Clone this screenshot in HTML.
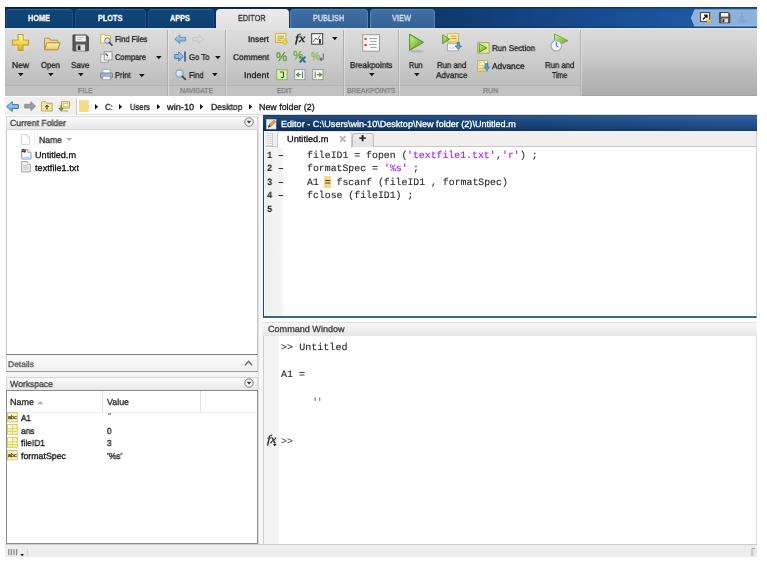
<!DOCTYPE html>
<html lang="en"><head><meta charset="utf-8"><title>MATLAB Editor</title>
<style>
html,body{margin:0;padding:0;background:#fff;}
body{width:767px;height:561px;position:relative;overflow:hidden;font-family:"Liberation Sans",sans-serif;}
.b{position:absolute;box-sizing:border-box;}
.t{position:absolute;white-space:pre;text-rendering:geometricPrecision;will-change:transform;-webkit-text-stroke:0.3px currentColor;line-height:14px;height:14px;transform-origin:0 50%;}
svg{position:absolute;overflow:visible;}
</style></head><body>
<div class="b" style="left:5px;top:7px;width:752px;height:20.8px;background:linear-gradient(to right,#0a315f 0%,#0c3769 55%,#174b90 78%,#2160ad 100%);"></div>
<div class="b" style="left:5px;top:7px;width:752px;height:20.8px;background:linear-gradient(to bottom,rgba(0,0,0,.3) 0,rgba(0,0,0,.3) 1px,rgba(0,0,0,0) 2px,rgba(0,0,0,0) 19px,rgba(0,0,0,.2) 20.8px);"></div>
<div class="b" style="left:5.5px;top:9px;width:67.5px;height:19px;border:1px solid #1d5185;border-top-color:#2e6498;border-bottom:none;border-radius:4px 4px 0 0;background:linear-gradient(#10467a,#0d3f70);"></div>
<div class="b" style="left:74.5px;top:9px;width:71.8px;height:19px;border:1px solid #1d5185;border-top-color:#2e6498;border-bottom:none;border-radius:4px 4px 0 0;background:linear-gradient(#10467a,#0d3f70);"></div>
<div class="b" style="left:148px;top:9px;width:66.3px;height:19px;border:1px solid #1d5185;border-top-color:#2e6498;border-bottom:none;border-radius:4px 4px 0 0;background:linear-gradient(#10467a,#0d3f70);"></div>
<div class="b" style="left:289.5px;top:9px;width:78px;height:18.5px;border:1px solid #5583b3;border-bottom:none;border-radius:4px 4px 0 0;background:linear-gradient(#416fa2,#34639a);"></div>
<div class="b" style="left:369.5px;top:9px;width:65.5px;height:18.5px;border:1px solid #5583b3;border-bottom:none;border-radius:4px 4px 0 0;background:linear-gradient(#416fa2,#34639a);"></div>
<div class="b" style="left:215.5px;top:9px;width:73.5px;height:19.5px;border-radius:4px 4px 0 0;background:linear-gradient(#ececec,#e0e0e0);"></div>
<svg style="left:690px;top:8.5px" width="67" height="18" viewBox="0 0 67 18"><path d="M4.700 .8H67V17H4.700L1.300 8.900Z" fill="#8db1db" stroke="#a9c6e6" stroke-width=".7"/></svg>
<div class="b" style="left:5px;top:27.8px;width:752px;height:68.7px;background:linear-gradient(#e6e6e6 0%,#dadada 3%,#cecece 35%,#b9b9b9 72%,#acacac 100%);border-bottom:1px solid #a2a2a2;"></div>
<div class="b" style="left:5px;top:27.8px;width:576px;height:57.7px;background:linear-gradient(#e6e6e6 0%,#dddddd 4%,#d0d0d0 45%,#bdbdbd 100%);"></div>
<div class="b" style="left:5px;top:85.5px;width:576px;height:10.5px;background:#c2c2c2;"></div>
<div class="b" style="left:166.5px;top:30px;width:1px;height:66px;background:#b0b0b0;"></div>
<div class="b" style="left:167.5px;top:30px;width:1px;height:66px;background:rgba(255,255,255,.35);"></div>
<div class="b" style="left:225px;top:30px;width:1px;height:66px;background:#b0b0b0;"></div>
<div class="b" style="left:226px;top:30px;width:1px;height:66px;background:rgba(255,255,255,.35);"></div>
<div class="b" style="left:342.5px;top:30px;width:1px;height:66px;background:#b0b0b0;"></div>
<div class="b" style="left:343.5px;top:30px;width:1px;height:66px;background:rgba(255,255,255,.35);"></div>
<div class="b" style="left:397.5px;top:30px;width:1px;height:66px;background:#b0b0b0;"></div>
<div class="b" style="left:398.5px;top:30px;width:1px;height:66px;background:rgba(255,255,255,.35);"></div>
<div class="b" style="left:580px;top:30px;width:1px;height:66px;background:#b0b0b0;"></div>
<div class="b" style="left:581px;top:30px;width:1px;height:66px;background:rgba(255,255,255,.35);"></div>
<div class="b" style="left:5px;top:97px;width:71px;height:18px;background:#f0f0f0;"></div>
<div class="b" style="left:76px;top:97.5px;width:681px;height:17.5px;background:#fff;border-left:1px solid #c9c9c9;border-bottom:1px solid #dcdcdc;"></div>
<div class="b" style="left:5.5px;top:116px;width:252.5px;height:14px;background:linear-gradient(#fbfbfb,#e6e6e6);border:1px solid #dadada;border-bottom:1px solid #d6d6d6;"></div>
<div class="b" style="left:5.5px;top:130px;width:252.5px;height:225px;background:#fff;border-left:1px solid #c8c8c8;border-right:1px solid #c8c8c8;border-bottom:1px solid #7d7d7d;"></div>
<div class="b" style="left:5.5px;top:355px;width:252.5px;height:16.5px;background:linear-gradient(#fdfdfd,#f0f0f0);border-bottom:1px solid #9a9a9a;border-left:1px solid #d0d0d0;border-right:1px solid #d0d0d0;"></div>
<div class="b" style="left:5.5px;top:371.5px;width:252.5px;height:5px;background:#f4f4f4;"></div>
<div class="b" style="left:5.5px;top:376.5px;width:252.5px;height:14px;background:linear-gradient(#fbfbfb,#e6e6e6);border:1px solid #d4d4d4;border-bottom:none;"></div>
<div class="b" style="left:5.5px;top:390px;width:252.5px;height:153.5px;background:#fff;border:1px solid #8c8c8c;"></div>
<div class="b" style="left:102px;top:391px;width:1px;height:21px;background:#e2e2e2;"></div>
<div class="b" style="left:200px;top:391px;width:1px;height:21px;background:#e2e2e2;"></div>
<div class="b" style="left:6.5px;top:411.5px;width:250px;height:1px;background:#f0f0f0;"></div>
<div class="b" style="left:258px;top:115px;width:5px;height:428.5px;background:#f7f7f7;border-left:1px solid #e0e0e0;"></div>
<div class="b" style="left:263px;top:115px;width:494px;height:202.5px;background:#fff;border-left:1.7px solid #1f4678;border-bottom:2px solid #3e6495;border-right:1px solid #d0d0d0;"></div>
<div class="b" style="left:263px;top:115px;width:494px;height:15.8px;background:linear-gradient(to right,#133c6f 0%,#16427a 40%,#1f508c 80%,#235593 100%);"></div>
<div class="b" style="left:263px;top:115px;width:494px;height:15.8px;background:linear-gradient(rgba(0,0,0,.2) 0,rgba(255,255,255,.08) 1.2px,rgba(255,255,255,0) 45%,rgba(0,0,0,.2) 92%,rgba(0,0,0,.35) 100%);"></div>
<div class="b" style="left:265px;top:130.8px;width:491px;height:16.7px;background:linear-gradient(#eef3f8 0,#f0efee 2.5px,#f0efee 100%);border-bottom:1px solid #c6c6c6;"></div>
<div class="b" style="left:264.7px;top:147.5px;width:19px;height:168px;background:linear-gradient(to right,#eaf1f9 0,#f1f1f1 2px,#f3f3f3 80%,#fbfbfb 100%);"></div>
<div class="b" style="left:277px;top:131.3px;width:74.5px;height:16.4px;background:#fff;border:1px solid #cdcdcd;border-top-color:#e0e0e0;border-bottom:none;border-radius:4px 4px 0 0;"></div>
<div class="b" style="left:351.5px;top:132.5px;width:22.5px;height:14.5px;background:linear-gradient(#ececec,#e2e2e2);border:1px solid #bcbcbc;border-bottom:none;border-radius:3px 3px 0 0;"></div>
<div class="b" style="left:267px;top:133px;width:6px;height:13px;background:repeating-linear-gradient(#d8d8d8 0,#d8d8d8 1px,#f4f4f4 1px,#f4f4f4 2px);border-right:1px solid #c9c9c9;"></div>
<div class="b" style="left:324px;top:175.5px;width:7px;height:12px;background:#f8d98a;"></div>
<div class="b" style="left:263px;top:321.5px;width:494px;height:14.5px;background:linear-gradient(#f8f8f8,#e6e6e6);border-top:1px solid #e2e2e2;"></div>
<div class="b" style="left:263px;top:336px;width:494px;height:207.5px;background:#fff;border-left:1px solid #cfcfcf;border-right:1px solid #dcdcdc;"></div>
<div class="b" style="left:264px;top:336px;width:14.5px;height:207.5px;background:#f3f3f3;"></div>
<div class="b" style="left:5px;top:543.5px;width:752px;height:13px;background:#ededed;border-top:1px solid #cdcdcd;"></div>
<svg width="0" height="0" style="left:0;top:0"><defs>
<linearGradient id="gNew" x1="0" y1="0" x2="0" y2="1"><stop offset="0" stop-color="#fbf3a6"/><stop offset=".5" stop-color="#f3d94e"/><stop offset="1" stop-color="#d9ae22"/></linearGradient>
<linearGradient id="gFold" x1="0" y1="0" x2="0" y2="1"><stop offset="0" stop-color="#fdf2c4"/><stop offset="1" stop-color="#e9c560"/></linearGradient>
<linearGradient id="gGreen" x1="0" y1="0" x2="1" y2="1"><stop offset="0" stop-color="#d4f0a0"/><stop offset=".55" stop-color="#8cc63f"/><stop offset="1" stop-color="#5e9a28"/></linearGradient>
<linearGradient id="gBlueA" x1="0" y1="0" x2="0" y2="1"><stop offset="0" stop-color="#c4e0f6"/><stop offset="1" stop-color="#5a9bd0"/></linearGradient>
<linearGradient id="gNote" x1="0" y1="0" x2="0" y2="1"><stop offset="0" stop-color="#fdf8c8"/><stop offset="1" stop-color="#f0e27c"/></linearGradient>
<linearGradient id="gLens" x1="0" y1="0" x2="1" y2="1"><stop offset="0" stop-color="#ffffff"/><stop offset="1" stop-color="#a8cdea"/></linearGradient>
<radialGradient id="gGlow"><stop offset="0" stop-color="#fff" stop-opacity=".9"/><stop offset="1" stop-color="#fff" stop-opacity="0"/></radialGradient>
</defs></svg>
<svg style="left:10px;top:32px" width="21" height="21" viewBox="0 0 21 21"><circle cx="10.5" cy="10.5" r="10.5" fill="url(#gGlow)" opacity=".6"/><path d="M8 2.5h5v5.5h5.5v5H13v5.5H8V13H2.500V8H8z" fill="url(#gNew)" stroke="#c39a17" stroke-width="1.1" stroke-linejoin="round"/><path d="M9 4h3v5" fill="none" stroke="#fffbe0" stroke-width="1" opacity=".8"/></svg>
<svg style="left:42.5px;top:36.8px" width="18" height="14.5" viewBox="0 0 18 14.5"><path d="M1.500 12.800V2.200Q1.500 1.200 2.500 1.200H6.300L7.800 3.200H14Q15 3.200 15 4.200V6" fill="#efd98c" stroke="#b4943a" stroke-width="1"/><path d="M1.500 12.800L3.800 5.800H17L14.800 12.800Z" fill="url(#gFold)" stroke="#b08c2c" stroke-width="1" stroke-linejoin="round"/></svg>
<svg style="left:72px;top:34.2px" width="17.5" height="18" viewBox="0 0 17.5 18"><path d="M1 1H14.300L16.300 3V16.800H1Z" fill="#595959" stroke="#3c3c3c" stroke-width="1"/><rect x="3.500" y="1.500" width="10.300" height="6" fill="#f6f6f6"/><path d="M5 3.500h7M5 5.500h5" stroke="#b0b0b0" stroke-width=".8"/><rect x="4.300" y="10.500" width="8.700" height="6.300" fill="#dcdcdc"/><rect x="5.800" y="11.500" width="2.600" height="4.500" fill="#2e2e2e"/></svg>
<svg style="left:99.5px;top:33px" width="13" height="12.5" viewBox="0 0 13 12.5"><path d="M.7 10V1.200H4.500L5.500 2.500H10.500V10Z" fill="#fbf8e2" stroke="#d2bb3e" stroke-width="1.100"/><circle cx="7.400" cy="7.600" r="2.700" fill="url(#gLens)" stroke="#5a7fa6" stroke-width="1"/><path d="M9.400 9.700L12 12.200" stroke="#33475e" stroke-width="1.600" stroke-linecap="round"/></svg>
<svg style="left:99.5px;top:51px" width="13" height="12" viewBox="0 0 13 12"><rect x=".8" y="3.200" width="7.500" height="8" fill="#f4f4f4" stroke="#9a9a9a" stroke-width=".9"/><rect x="4.200" y=".8" width="7.800" height="8.200" fill="#fcfcfc" stroke="#8a8a8a" stroke-width=".9"/><path d="M5.500 2.500L8 5" stroke="#555" stroke-width="1.200"/><path d="M6 6.800h4" stroke="#c8c8c8" stroke-width=".8"/></svg>
<svg style="left:99.5px;top:68.8px" width="13" height="11.5" viewBox="0 0 13 11.5"><rect x="3" y=".6" width="7" height="4" fill="#fdfdfd" stroke="#a4acb8" stroke-width=".8"/><rect x=".6" y="4" width="11.800" height="5" rx="1" fill="#a9b7c8" stroke="#6d7c90" stroke-width=".9"/><rect x="2.800" y="7.200" width="7.400" height="3.600" fill="#f8f8f8" stroke="#8a94a2" stroke-width=".8"/></svg>
<svg style="left:174px;top:33.5px" width="12.5" height="10.5" viewBox="0 0 12.5 10.5"><path d="M.8 5.200L5.800 .8V3.400H11.700V7H5.800V9.700Z" fill="url(#gBlueA)" stroke="#5b88b6" stroke-width=".9" stroke-linejoin="round"/></svg>
<svg style="left:191.5px;top:33.5px" width="12.5" height="10.5" viewBox="0 0 12.5 10.5"><path d="M11.700 5.200L6.700 .8V3.400H.8V7H6.700V9.700Z" fill="#d8d8d8" stroke="#c0c0c0" stroke-width=".9" stroke-linejoin="round" opacity=".85"/></svg>
<svg style="left:174px;top:51.3px" width="12.5" height="11" viewBox="0 0 12.5 11"><path d="M9.300 5.500L4.700 1V3.600H.8V7.400H4.700V10Z" fill="url(#gBlueA)" stroke="#3f70a4" stroke-width=".9" stroke-linejoin="round"/><path d="M11 .6V10.400" stroke="#2b5688" stroke-width="1.500"/></svg>
<svg style="left:175px;top:69px" width="11.5" height="11.5" viewBox="0 0 11.5 11.5"><circle cx="4.600" cy="4.600" r="3.700" fill="url(#gLens)" stroke="#8c9aaa" stroke-width="1.100"/><path d="M7.400 7.400L10.400 10.400" stroke="#3a4a5e" stroke-width="1.800" stroke-linecap="round"/></svg>
<svg style="left:274.8px;top:33.2px" width="13" height="12" viewBox="0 0 13 12"><rect x=".6" y=".6" width="10.300" height="9" fill="url(#gNote)" stroke="#c6ae3a" stroke-width=".9"/><path d="M2.500 3.200h6.500M2.500 5.200h6.500M2.500 7.200h4" stroke="#9c8a3a" stroke-width=".8"/><path d="M10 6.300L12.700 9 10 11.700 7.300 9Z" fill="#f6d64a" stroke="#c9a21a" stroke-width=".7"/></svg>
<svg style="left:310.8px;top:33.2px" width="12.5" height="12" viewBox="0 0 12.5 12"><rect x=".7" y=".7" width="11" height="10.500" fill="#fdfdfd" stroke="#3c3c3c" stroke-width="1"/><path d="M2 9L5 5L6.500 7L9 2.500" fill="none" stroke="#555" stroke-width=".9"/><rect x="8" y="6" width="1.800" height="4.500" fill="#222"/></svg>
<svg style="left:275.5px;top:69px" width="12" height="11.5" viewBox="0 0 12 11.5"><rect x=".7" y=".7" width="10.400" height="10" fill="#d9efb6" stroke="#86b54c" stroke-width="1"/><path d="M4 3H7.500V8.500H5" fill="none" stroke="#3e4a2e" stroke-width="1"/></svg>
<svg style="left:293.5px;top:69.3px" width="12" height="11.5" viewBox="0 0 12 11.5"><rect x=".7" y=".7" width="10.300" height="10" fill="#fbfbfb" stroke="#8e8e8e" stroke-width=".9"/><path d="M1.600 5.700L5 3V8.400Z" fill="#5e9a28"/><path d="M4.500 5.700H7.300" stroke="#5e9a28" stroke-width="1.300"/><path d="M8.600 2.500V9" stroke="#6a6a6a" stroke-width="1"/></svg>
<svg style="left:311.5px;top:69.3px" width="12" height="11.5" viewBox="0 0 12 11.5"><rect x=".7" y=".7" width="10.300" height="10" fill="#fbfbfb" stroke="#8e8e8e" stroke-width=".9"/><path d="M10.600 5.700L7.200 3V8.400Z" fill="#5e9a28"/><path d="M4.800 5.700H7.600" stroke="#5e9a28" stroke-width="1.300"/><path d="M3.200 2.500V9" stroke="#6a6a6a" stroke-width="1"/></svg>
<svg style="left:362px;top:33.7px" width="18.5" height="18" viewBox="0 0 18.5 18"><rect x=".7" y=".7" width="16.800" height="16.500" fill="#f7f7f7" stroke="#9a9a9a" stroke-width="1"/><circle cx="3.600" cy="5" r="1.300" fill="#d8434a"/><circle cx="3.600" cy="11" r="1.300" fill="#d8434a"/><path d="M7 4.500h8M8.500 7.500h6M7 10.500h7.500M8.500 13.500h6" stroke="#a8a8a8" stroke-width="1.100"/></svg>
<svg style="left:407.5px;top:33px" width="17" height="20" viewBox="0 0 17 20"><ellipse cx="9" cy="18.300" rx="7" ry="1.300" fill="#7a7a7a" opacity=".35"/><path d="M1.600 1.200L15.300 9.300 1.600 17.300Z" fill="url(#gGreen)" stroke="#5b8f28" stroke-width="1.100" stroke-linejoin="round"/></svg>
<svg style="left:441.5px;top:33px" width="20" height="19" viewBox="0 0 20 19"><rect x="5.500" y=".8" width="11" height="8.200" fill="url(#gNote)" stroke="#c9b548" stroke-width=".9"/><path d="M8.500 3.200h6M8.500 5.500h6" stroke="#b5a14a" stroke-width=".9"/><path d="M.7 1.800L7.600 6.200 .7 10.600Z" fill="url(#gGreen)" stroke="#5b8f28" stroke-width=".9" stroke-linejoin="round"/><rect x="5.500" y="10.800" width="11" height="7" fill="#fbfbfb" stroke="#a8a8a8" stroke-width=".9"/><path d="M7.500 15h5" stroke="#bbb" stroke-width=".9"/><path d="M15.200 9.500V13H13L16.300 16.600 19.500 13H17.400V9.500Z" fill="#5d9bd6" stroke="#2f6aa8" stroke-width=".7"/></svg>
<svg style="left:476.5px;top:41.8px" width="13" height="12" viewBox="0 0 13 12"><rect x=".7" y=".7" width="11.500" height="10.500" fill="#e9eca0" stroke="#9aa646" stroke-width=".9"/><path d="M2.200 1.800L10 6 2.200 10.200Z" fill="url(#gGreen)" stroke="#4f8422" stroke-width=".9" stroke-linejoin="round"/></svg>
<svg style="left:476.5px;top:60px" width="13" height="12" viewBox="0 0 13 12"><rect x=".7" y=".7" width="9.800" height="10.500" fill="url(#gNote)" stroke="#b9ab52" stroke-width=".9"/><rect x="2.200" y="2.200" width="5.500" height="3.500" fill="#fdfdf0" stroke="#c8bb6a" stroke-width=".6"/><path d="M2 8.800h5" stroke="#b5a14a" stroke-width=".8"/><path d="M8.600 3.500V7H6.800L9.800 10.600 12.700 7H10.900V3.500Z" fill="#5d9bd6" stroke="#2f6aa8" stroke-width=".7"/></svg>
<svg style="left:550px;top:33px" width="19" height="19.5" viewBox="0 0 19 19.5"><path d="M4.500 .9L18 7.600 4.500 14.300Z" fill="url(#gGreen)" stroke="#6ea23a" stroke-width=".9" stroke-linejoin="round"/><circle cx="6.300" cy="12.800" r="5.300" fill="#f4f8fc" stroke="#a6aeb8" stroke-width="1.300"/><path d="M6.300 9.200V12.800L8.500 14.200" fill="none" stroke="#3d5d80" stroke-width="1"/></svg>
<svg style="left:700.4px;top:12px" width="11" height="11" viewBox="0 0 11 11"><rect x=".6" y=".6" width="9" height="9" fill="#fdfdfd" stroke="#333" stroke-width=".9"/><path d="M3 7.500L6.500 3.500M4 3.200H7V6" fill="none" stroke="#111" stroke-width="1.300"/><path d="M8.500 6L9.300 7.700 11 8 9.800 9.300 10 11 8.500 10.200 7 11 7.200 9.300 6 8 7.700 7.700Z" fill="#f4d648" stroke="#c8a520" stroke-width=".4"/></svg>
<svg style="left:719px;top:12px" width="11.5" height="11.5" viewBox="0 0 11.5 11.5"><path d="M.6 .6H9.300L10.800 2V10.800H.6Z" fill="#555" stroke="#333" stroke-width=".8"/><rect x="2" y="1" width="7.200" height="3.600" fill="#f2f2f2"/><rect x="2.500" y="6.500" width="6.500" height="4" fill="#dedede"/><rect x="3.500" y="7.200" width="1.800" height="3" fill="#222"/></svg>
<svg style="left:737px;top:13px" width="10.5" height="10" viewBox="0 0 10.5 10"><path d="M5 0V5M2.500 3L5 5.500 7.500 3M1 7H9.500M1 9H9.500" fill="none" stroke="#7f9fc6" stroke-width="1"/></svg>
<svg style="left:6.3px;top:100.5px" width="13" height="11.5" viewBox="0 0 13 11.5"><path d="M.7 5.500L6.200 .7V3.600H12.300V7.500H6.200V10.400Z" fill="url(#gBlueA)" stroke="#3b78b4" stroke-width="1" stroke-linejoin="round"/></svg>
<svg style="left:23.5px;top:101.2px" width="12.5" height="10.5" viewBox="0 0 12.5 10.5"><path d="M11.800 5.200L6.800 .7V3.300H.6V7.100H6.800V9.700Z" fill="#9b9b9b" stroke="#8a8a8a" stroke-width=".7" stroke-linejoin="round"/></svg>
<svg style="left:41.3px;top:101.2px" width="12.5" height="10.6" viewBox="0 0 12.5 10.6"><path d="M.6 10V1.700Q.6 .7 1.600 .7H4.600L5.600 2.200H11.200V10Z" fill="#f5e8a6" stroke="#b7a04a" stroke-width=".9"/><path d="M6 8.500V4.500M4.300 6L6 4.300 7.700 6" fill="none" stroke="#222" stroke-width="1"/></svg>
<svg style="left:58.3px;top:100.5px" width="12.5" height="12" viewBox="0 0 12.5 12"><rect x="3.500" y=".7" width="8" height="6.300" fill="#f5e8a6" stroke="#b7a04a" stroke-width=".9"/><rect x="5.300" y="2.500" width="4.500" height="3" fill="#fdf9dc" stroke="#c9b868" stroke-width=".6"/><path d="M3 4V8.500M.8 6.800L3 9.500 5.300 6.800" fill="none" stroke="#4e9a2a" stroke-width="1.300"/><path d="M3 10H10" stroke="#b7a04a" stroke-width=".9"/></svg>
<svg style="left:79px;top:100px" width="10" height="12" viewBox="0 0 10 12"><rect x=".5" y=".5" width="8.800" height="11" fill="#f7dc85" stroke="#f1d27a" stroke-width=".6"/></svg>
<svg style="left:17.7px;top:73.45px" width="5.6" height="3.3" viewBox="0 0 5.6 3.3"><path d="M0 0H5.6 L2.8 3.3 Z" fill="#111"/></svg>
<svg style="left:48.2px;top:73.45px" width="5.6" height="3.3" viewBox="0 0 5.6 3.3"><path d="M0 0H5.6 L2.8 3.3 Z" fill="#111"/></svg>
<svg style="left:77.7px;top:73.45px" width="5.6" height="3.3" viewBox="0 0 5.6 3.3"><path d="M0 0H5.6 L2.8 3.3 Z" fill="#111"/></svg>
<svg style="left:155.5px;top:55.65px" width="5.6" height="3.3" viewBox="0 0 5.6 3.3"><path d="M0 0H5.6 L2.8 3.3 Z" fill="#111"/></svg>
<svg style="left:138.9px;top:73.65px" width="5.6" height="3.3" viewBox="0 0 5.6 3.3"><path d="M0 0H5.6 L2.8 3.3 Z" fill="#111"/></svg>
<svg style="left:215.2px;top:55.85px" width="5.6" height="3.3" viewBox="0 0 5.6 3.3"><path d="M0 0H5.6 L2.8 3.3 Z" fill="#111"/></svg>
<svg style="left:212px;top:73.45px" width="5.6" height="3.3" viewBox="0 0 5.6 3.3"><path d="M0 0H5.6 L2.8 3.3 Z" fill="#111"/></svg>
<svg style="left:331.5px;top:36.95px" width="5.6" height="3.3" viewBox="0 0 5.6 3.3"><path d="M0 0H5.6 L2.8 3.3 Z" fill="#111"/></svg>
<svg style="left:368.8px;top:73.45px" width="5.6" height="3.3" viewBox="0 0 5.6 3.3"><path d="M0 0H5.6 L2.8 3.3 Z" fill="#111"/></svg>
<svg style="left:413.5px;top:73.45px" width="5.6" height="3.3" viewBox="0 0 5.6 3.3"><path d="M0 0H5.6 L2.8 3.3 Z" fill="#111"/></svg>
<svg style="left:94.9px;top:104.2px" width="3.2" height="5.4" viewBox="0 0 3.2 5.4"><path d="M0 0V5.4 L3.2 2.7 Z" fill="#111"/></svg>
<svg style="left:119.1px;top:104.2px" width="3.2" height="5.4" viewBox="0 0 3.2 5.4"><path d="M0 0V5.4 L3.2 2.7 Z" fill="#111"/></svg>
<svg style="left:156.7px;top:104.2px" width="3.2" height="5.4" viewBox="0 0 3.2 5.4"><path d="M0 0V5.4 L3.2 2.7 Z" fill="#111"/></svg>
<svg style="left:200.4px;top:104.2px" width="3.2" height="5.4" viewBox="0 0 3.2 5.4"><path d="M0 0V5.4 L3.2 2.7 Z" fill="#111"/></svg>
<svg style="left:248.7px;top:104.2px" width="3.2" height="5.4" viewBox="0 0 3.2 5.4"><path d="M0 0V5.4 L3.2 2.7 Z" fill="#111"/></svg>
<svg style="left:244.4px;top:117.4px" width="10" height="10" viewBox="0 0 10 10"><circle cx="5" cy="5" r="4.200" fill="#fcfcfc" stroke="#6a6a6a" stroke-width=".9"/><path d="M2.700 3.700H7.300L5 6.800Z" fill="#3c3c3c"/></svg>
<svg style="left:244.2px;top:377.5px" width="10" height="10" viewBox="0 0 10 10"><circle cx="5" cy="5" r="4.200" fill="#fcfcfc" stroke="#6a6a6a" stroke-width=".9"/><path d="M2.700 3.700H7.300L5 6.800Z" fill="#3c3c3c"/></svg>
<svg style="left:243.7px;top:360px" width="9" height="6" viewBox="0 0 9 6"><path d="M1 5.200L4.500 1.300 8 5.200" fill="none" stroke="#666" stroke-width="1.400"/></svg>
<svg style="left:21px;top:134px" width="9.5" height="11" viewBox="0 0 9.5 11"><path d="M.6 .6H6L8.700 3.300V10.400H.6Z" fill="#fff" stroke="#cfcfcf" stroke-width=".9"/><path d="M6 .6V3.300H8.700" fill="none" stroke="#d8d8d8" stroke-width=".7"/></svg>
<svg style="left:65.5px;top:137.5px" width="6.3" height="3.2" viewBox="0 0 6.3 3.2"><path d="M0 0H6.300L3.150 3.200Z" fill="#b4b4b4"/></svg>
<svg style="left:37px;top:400.5px" width="6.6" height="3.3" viewBox="0 0 6.6 3.3"><path d="M0 3.300H6.600L3.300 0Z" fill="#b4b4b4"/></svg>
<svg style="left:33.5px;top:131px" width="4.5" height="15" viewBox="0 0 4.5 15"><path d="M.5 0V15M3.900 0V15" stroke="#ededed" stroke-width=".8"/></svg>
<svg style="left:21px;top:148px" width="11" height="11.8" viewBox="0 0 11 11.8"><path d="M.7 1.500H6.800L10 4.500V11H.7Z" fill="#fbfcfe" stroke="#7f9cc4" stroke-width="1"/><path d="M6.800 1.500V4.500H10" fill="#e4ecf6" stroke="#7f9cc4" stroke-width=".7"/><path d="M.3 3.800L2.200 .4 4 2.600 5.300 1.600 4.300 4.800Z" fill="#7a2418"/><path d="M1.200 3.300L2.300 1.500 3.300 3Z" fill="#e0683a"/><path d="M2 9.300h6.500" stroke="#b6c6dc" stroke-width=".9"/></svg>
<svg style="left:21px;top:161.2px" width="10.2" height="11.6" viewBox="0 0 10.2 11.6"><path d="M.6 .6H6.300L9.300 3.500V10.900H.6Z" fill="#f2f2f2" stroke="#9c9c9c" stroke-width=".9"/><path d="M6.300 .6V3.500H9.300" fill="#fff" stroke="#9c9c9c" stroke-width=".7"/><path d="M2.200 4.500h4M2.200 6.300h5.500M2.200 8.100h5.500" stroke="#b5b5b5" stroke-width=".8"/></svg>
<svg style="left:6.6px;top:411.6px" width="11" height="10.5" viewBox="0 0 11 10.5"><rect x=".5" y=".5" width="9.800" height="9.300" fill="#f8f4c0" stroke="#cfc670" stroke-width=".9"/></svg>
<svg style="left:6.6px;top:424.3px" width="11" height="11" viewBox="0 0 11 11"><rect x=".5" y=".5" width="9.800" height="9.800" fill="#f7f3b2" stroke="#d4c95e" stroke-width=".9"/><rect x="1" y="1" width="4.300" height="3.600" fill="#fdfdf4"/><path d="M5.400 .5V10.300M.5 4.700H10.300M.5 7.500H10.300" stroke="#d9cf6e" stroke-width=".8"/></svg>
<svg style="left:6.6px;top:436.8px" width="11" height="11" viewBox="0 0 11 11"><rect x=".5" y=".5" width="9.800" height="9.800" fill="#f7f3b2" stroke="#d4c95e" stroke-width=".9"/><rect x="1" y="1" width="4.300" height="3.600" fill="#fdfdf4"/><path d="M5.400 .5V10.300M.5 4.700H10.300M.5 7.500H10.300" stroke="#d9cf6e" stroke-width=".8"/></svg>
<svg style="left:6.6px;top:449.8px" width="11" height="10.5" viewBox="0 0 11 10.5"><rect x=".5" y=".5" width="9.800" height="9.300" fill="#f8f4c0" stroke="#cfc670" stroke-width=".9"/></svg>
<svg style="left:265.8px;top:118.6px" width="10.8" height="10.4" viewBox="0 0 10.8 10.4"><rect x=".4" y=".4" width="9.600" height="9.600" fill="#eef0f2" stroke="#c9cdd2" stroke-width=".6"/><path d="M2.200 8.400L3 5.600 8 1 9.800 2.800 4.800 7.600Z" fill="#e89a3c" stroke="#b5651d" stroke-width=".5"/><path d="M2.200 8.400L3 5.600 4.800 7.600Z" fill="#3a3a3a"/></svg>
<svg style="left:272.8px;top:444px" width="3.6" height="2.2" viewBox="0 0 3.6 2.2"><path d="M0 0H3.600L1.800 2.200Z" fill="#111"/></svg>
<svg style="left:8px;top:548.6px" width="21" height="7.5" viewBox="0 0 21 7.5"><path d="M.8 0V6.200M3.400 0V6.200M6 0V6.200M8.600 0V6.200" stroke="#8a8a8a" stroke-width="1.300"/><path d="M12.300 5H16L14.150 7.200Z" fill="#111"/><path d="M19.300 0V7.500" stroke="#cfcfcf" stroke-width=".9"/></svg>
<svg style="left:751px;top:547px" width="5" height="9" viewBox="0 0 5 9"><path d="M1 9V1.500H4.500" fill="none" stroke="#a8a8a8" stroke-width="1"/><path d="M3 9V3.500" stroke="#d0d0d0" stroke-width=".8"/></svg>
<svg style="left:298.8px;top:55.8px" width="7" height="7" viewBox="0 0 7 7"><path d="M1.200 1.200L5.800 5.800M5.800 1.200L1.200 5.800" stroke="#2f68ad" stroke-width="2" stroke-linecap="round"/></svg>
<svg style="left:318.5px;top:52.5px" width="5.5" height="9" viewBox="0 0 5.5 9"><path d="M4.300 .5V6.300H1.200M2.800 4.500L1 6.300 2.800 8" fill="none" stroke="#6e6e6e" stroke-width="1.100"/></svg>
<span class="t" id="t0" style="left:28.00px;top:11.30px;font-size:8.70px;color:#ffffff;font-family:'Liberation Sans', sans-serif;font-weight:bold;transform:scaleX(0.8441);">HOME</span>
<span class="t" id="t1" style="left:97.50px;top:11.30px;font-size:8.70px;color:#ffffff;font-family:'Liberation Sans', sans-serif;font-weight:bold;transform:scaleX(0.8457);">PLOTS</span>
<span class="t" id="t2" style="left:170.20px;top:11.30px;font-size:8.70px;color:#ffffff;font-family:'Liberation Sans', sans-serif;font-weight:bold;transform:scaleX(0.8491);">APPS</span>
<span class="t" id="t3" style="left:237.50px;top:11.30px;font-size:8.70px;color:#333;font-family:'Liberation Sans', sans-serif;transform:scaleX(0.8417);">EDITOR</span>
<span class="t" id="t4" style="left:312.50px;top:11.30px;font-size:8.70px;color:#dbe7f4;font-family:'Liberation Sans', sans-serif;transform:scaleX(0.8390);">PUBLISH</span>
<span class="t" id="t5" style="left:392.00px;top:11.30px;font-size:8.70px;color:#dbe7f4;font-family:'Liberation Sans', sans-serif;transform:scaleX(0.8557);">VIEW</span>
<span class="t" id="t6" style="left:12.00px;top:57.50px;font-size:8.60px;color:#1e1e1e;font-family:'Liberation Sans', sans-serif;transform:scaleX(0.9882);">New</span>
<span class="t" id="t7" style="left:41.00px;top:57.50px;font-size:8.60px;color:#1e1e1e;font-family:'Liberation Sans', sans-serif;transform:scaleX(0.9034);">Open</span>
<span class="t" id="t8" style="left:71.00px;top:57.50px;font-size:8.60px;color:#1e1e1e;font-family:'Liberation Sans', sans-serif;transform:scaleX(0.9442);">Save</span>
<span class="t" id="t9" style="left:115.00px;top:32.00px;font-size:8.40px;color:#1e1e1e;font-family:'Liberation Sans', sans-serif;transform:scaleX(0.8950);">Find Files</span>
<span class="t" id="t10" style="left:115.00px;top:50.00px;font-size:8.40px;color:#1e1e1e;font-family:'Liberation Sans', sans-serif;transform:scaleX(0.8998);">Compare</span>
<span class="t" id="t11" style="left:115.00px;top:68.00px;font-size:8.40px;color:#1e1e1e;font-family:'Liberation Sans', sans-serif;transform:scaleX(0.8994);">Print</span>
<span class="t" id="t12" style="left:189.00px;top:50.00px;font-size:8.40px;color:#1e1e1e;font-family:'Liberation Sans', sans-serif;transform:scaleX(0.9233);">Go To</span>
<span class="t" id="t13" style="left:189.00px;top:68.00px;font-size:8.40px;color:#1e1e1e;font-family:'Liberation Sans', sans-serif;transform:scaleX(0.8897);">Find</span>
<span class="t" id="t14" style="left:248.00px;top:32.00px;font-size:8.40px;color:#1e1e1e;font-family:'Liberation Sans', sans-serif;">Insert</span>
<span class="t" id="t15" style="left:233.00px;top:50.00px;font-size:8.40px;color:#1e1e1e;font-family:'Liberation Sans', sans-serif;transform:scaleX(0.9914);">Comment</span>
<span class="t" id="t16" style="left:244.00px;top:68.00px;font-size:8.40px;color:#1e1e1e;font-family:'Liberation Sans', sans-serif;transform:scaleX(1.0731);">Indent</span>
<span class="t" id="t17" style="left:350.00px;top:57.50px;font-size:8.60px;color:#1e1e1e;font-family:'Liberation Sans', sans-serif;transform:scaleX(0.9363);">Breakpoints</span>
<span class="t" id="t18" style="left:408.50px;top:57.50px;font-size:8.60px;color:#1e1e1e;font-family:'Liberation Sans', sans-serif;transform:scaleX(0.8563);">Run</span>
<span class="t" id="t19" style="left:436.70px;top:57.50px;font-size:8.60px;color:#1e1e1e;font-family:'Liberation Sans', sans-serif;transform:scaleX(0.9015);">Run and</span>
<span class="t" id="t20" style="left:436.00px;top:67.50px;font-size:8.60px;color:#1e1e1e;font-family:'Liberation Sans', sans-serif;transform:scaleX(0.9416);">Advance</span>
<span class="t" id="t21" style="left:492.00px;top:41.00px;font-size:8.40px;color:#1e1e1e;font-family:'Liberation Sans', sans-serif;transform:scaleX(0.9425);">Run Section</span>
<span class="t" id="t22" style="left:492.00px;top:59.00px;font-size:8.40px;color:#1e1e1e;font-family:'Liberation Sans', sans-serif;">Advance</span>
<span class="t" id="t23" style="left:544.70px;top:57.50px;font-size:8.60px;color:#1e1e1e;font-family:'Liberation Sans', sans-serif;transform:scaleX(0.9015);">Run and</span>
<span class="t" id="t24" style="left:551.70px;top:67.50px;font-size:8.60px;color:#1e1e1e;font-family:'Liberation Sans', sans-serif;transform:scaleX(0.8146);">Time</span>
<span class="t" id="t25" style="left:78.00px;top:84.00px;font-size:7.20px;color:#808080;font-family:'Liberation Sans', sans-serif;transform:scaleX(0.9547);">FILE</span>
<span class="t" id="t26" style="left:180.00px;top:84.00px;font-size:7.20px;color:#808080;font-family:'Liberation Sans', sans-serif;transform:scaleX(0.9353);">NAVIGATE</span>
<span class="t" id="t27" style="left:277.00px;top:84.00px;font-size:7.20px;color:#808080;font-family:'Liberation Sans', sans-serif;transform:scaleX(0.9160);">EDIT</span>
<span class="t" id="t28" style="left:346.70px;top:84.00px;font-size:7.20px;color:#808080;font-family:'Liberation Sans', sans-serif;transform:scaleX(0.9447);">BREAKPOINTS</span>
<span class="t" id="t29" style="left:482.50px;top:84.00px;font-size:7.20px;color:#808080;font-family:'Liberation Sans', sans-serif;transform:scaleX(0.9629);">RUN</span>
<span class="t" id="t30" style="left:105.00px;top:99.80px;font-size:8.80px;color:#1a1a1a;font-family:'Liberation Sans', sans-serif;transform:scaleX(0.9078);">C:</span>
<span class="t" id="t31" style="left:130.00px;top:99.80px;font-size:8.80px;color:#1a1a1a;font-family:'Liberation Sans', sans-serif;transform:scaleX(0.8702);">Users</span>
<span class="t" id="t32" style="left:166.80px;top:99.80px;font-size:8.80px;color:#1a1a1a;font-family:'Liberation Sans', sans-serif;transform:scaleX(1.0493);">win-10</span>
<span class="t" id="t33" style="left:210.60px;top:99.80px;font-size:8.80px;color:#1a1a1a;font-family:'Liberation Sans', sans-serif;transform:scaleX(0.9727);">Desktop</span>
<span class="t" id="t34" style="left:259.00px;top:99.80px;font-size:8.80px;color:#1a1a1a;font-family:'Liberation Sans', sans-serif;transform:scaleX(1.0063);">New folder (2)</span>
<span class="t" id="t35" style="left:10.00px;top:116.40px;font-size:8.80px;color:#3c3c3c;font-family:'Liberation Sans', sans-serif;transform:scaleX(0.9873);">Current Folder</span>
<span class="t" id="t36" style="left:39.00px;top:133.00px;font-size:8.80px;color:#2a2a2a;font-family:'Liberation Sans', sans-serif;transform:scaleX(0.9800);">Name</span>
<span class="t" id="t37" style="left:35.00px;top:148.30px;font-size:8.80px;color:#111;font-family:'Liberation Sans', sans-serif;transform:scaleX(1.0351);">Untitled.m</span>
<span class="t" id="t38" style="left:35.00px;top:161.20px;font-size:8.80px;color:#111;font-family:'Liberation Sans', sans-serif;transform:scaleX(1.0461);">textfile1.txt</span>
<span class="t" id="t39" style="left:8.00px;top:357.50px;font-size:8.20px;color:#5a5a5a;font-family:'Liberation Sans', sans-serif;transform:scaleX(1.0387);">Details</span>
<span class="t" id="t40" style="left:10.00px;top:376.80px;font-size:8.80px;color:#3c3c3c;font-family:'Liberation Sans', sans-serif;transform:scaleX(0.9808);">Workspace</span>
<span class="t" id="t41" style="left:10.00px;top:395.00px;font-size:8.80px;color:#2a2a2a;font-family:'Liberation Sans', sans-serif;transform:scaleX(1.0226);">Name</span>
<span class="t" id="t42" style="left:107.00px;top:395.00px;font-size:8.80px;color:#2a2a2a;font-family:'Liberation Sans', sans-serif;transform:scaleX(1.0064);">Value</span>
<span class="t" id="t43" style="left:21.00px;top:410.80px;font-size:8.80px;color:#111;font-family:'Liberation Sans', sans-serif;transform:scaleX(0.9289);">A1</span>
<span class="t" id="t44" style="left:21.00px;top:423.50px;font-size:8.80px;color:#111;font-family:'Liberation Sans', sans-serif;transform:scaleX(0.9445);">ans</span>
<span class="t" id="t45" style="left:21.00px;top:435.80px;font-size:8.80px;color:#111;font-family:'Liberation Sans', sans-serif;transform:scaleX(0.9624);">fileID1</span>
<span class="t" id="t46" style="left:21.00px;top:449.00px;font-size:8.80px;color:#111;font-family:'Liberation Sans', sans-serif;transform:scaleX(0.9959);">formatSpec</span>
<span class="t" id="t47" style="left:107.50px;top:409.80px;font-size:7.00px;color:#666;font-family:'Liberation Sans', sans-serif;transform:scaleX(1.1163);">''</span>
<span class="t" id="t48" style="left:107.00px;top:423.50px;font-size:8.80px;color:#111;font-family:'Liberation Sans', sans-serif;transform:scaleX(0.9172);">0</span>
<span class="t" id="t49" style="left:107.00px;top:435.80px;font-size:8.80px;color:#111;font-family:'Liberation Sans', sans-serif;transform:scaleX(0.9172);">3</span>
<span class="t" id="t50" style="left:107.00px;top:449.00px;font-size:8.80px;color:#111;font-family:'Liberation Sans', sans-serif;transform:scaleX(0.9619);">'%s'</span>
<span class="t" id="t51" style="left:281.30px;top:116.70px;font-size:8.80px;color:#ffffff;font-family:'Liberation Sans', sans-serif;transform:scaleX(1.0302);">Editor - C:\Users\win-10\Desktop\New folder (2)\Untitled.m</span>
<span class="t" id="t52" style="left:286.50px;top:132.30px;font-size:8.80px;color:#111;font-family:'Liberation Sans', sans-serif;transform:scaleX(1.0477);">Untitled.m</span>
<span class="t" id="t53" style="left:338.80px;top:132.30px;font-size:12.50px;color:#b4b4b4;font-family:'Liberation Sans', sans-serif;font-weight:bold;transform:scaleX(1.0120);">×</span>
<span class="t" id="t54" style="left:359.20px;top:132.20px;font-size:11.50px;color:#1a1a1a;font-family:'Liberation Sans', sans-serif;font-weight:bold;transform:scaleX(1.0716);">+</span>
<span class="t" id="t55" style="left:268.40px;top:322.00px;font-size:8.80px;color:#3c3c3c;font-family:'Liberation Sans', sans-serif;transform:scaleX(1.0308);">Command Window</span>
<span class="t" id="t56" style="left:307.00px;top:148.90px;font-size:9.85px;color:#2a2a2a;font-family:'Liberation Mono', monospace;-webkit-text-stroke:0.12px currentColor;">fileID1 = fopen (</span>
<span class="t" id="t57" style="left:407.47px;top:148.90px;font-size:9.85px;color:#a020f0;font-family:'Liberation Mono', monospace;-webkit-text-stroke:0.12px currentColor;">'textfile1.txt'</span>
<span class="t" id="t58" style="left:496.12px;top:148.90px;font-size:9.85px;color:#2a2a2a;font-family:'Liberation Mono', monospace;-webkit-text-stroke:0.12px currentColor;">,</span>
<span class="t" id="t59" style="left:502.03px;top:148.90px;font-size:9.85px;color:#a020f0;font-family:'Liberation Mono', monospace;-webkit-text-stroke:0.12px currentColor;">'r'</span>
<span class="t" id="t60" style="left:519.76px;top:148.90px;font-size:9.85px;color:#2a2a2a;font-family:'Liberation Mono', monospace;-webkit-text-stroke:0.12px currentColor;">) ;</span>
<span class="t" id="t61" style="left:307.00px;top:162.20px;font-size:9.85px;color:#2a2a2a;font-family:'Liberation Mono', monospace;-webkit-text-stroke:0.12px currentColor;">formatSpec = </span>
<span class="t" id="t62" style="left:383.83px;top:162.20px;font-size:9.85px;color:#a020f0;font-family:'Liberation Mono', monospace;-webkit-text-stroke:0.12px currentColor;">'%s'</span>
<span class="t" id="t63" style="left:407.47px;top:162.20px;font-size:9.85px;color:#2a2a2a;font-family:'Liberation Mono', monospace;-webkit-text-stroke:0.12px currentColor;"> ;</span>
<span class="t" id="t64" style="left:307.00px;top:175.60px;font-size:9.85px;color:#2a2a2a;font-family:'Liberation Mono', monospace;-webkit-text-stroke:0.12px currentColor;">A1 = fscanf (fileID1 , formatSpec)</span>
<span class="t" id="t65" style="left:307.00px;top:189.10px;font-size:9.85px;color:#2a2a2a;font-family:'Liberation Mono', monospace;-webkit-text-stroke:0.12px currentColor;">fclose (fileID1) ;</span>
<span class="t" id="t66" style="left:267.00px;top:148.90px;font-size:9.60px;color:#2a2a2a;font-family:'Liberation Mono', monospace;-webkit-text-stroke:0.12px currentColor;font-weight:bold;transform:scaleX(0.9019);">1</span>
<span class="t" id="t67" style="left:277.60px;top:148.90px;font-size:9.60px;color:#2a2a2a;font-family:'Liberation Mono', monospace;-webkit-text-stroke:0.12px currentColor;font-weight:bold;transform:scaleX(1.0060);">–</span>
<span class="t" id="t68" style="left:267.00px;top:162.20px;font-size:9.60px;color:#2a2a2a;font-family:'Liberation Mono', monospace;-webkit-text-stroke:0.12px currentColor;font-weight:bold;transform:scaleX(0.9019);">2</span>
<span class="t" id="t69" style="left:277.60px;top:162.20px;font-size:9.60px;color:#2a2a2a;font-family:'Liberation Mono', monospace;-webkit-text-stroke:0.12px currentColor;font-weight:bold;transform:scaleX(1.0060);">–</span>
<span class="t" id="t70" style="left:267.00px;top:175.60px;font-size:9.60px;color:#2a2a2a;font-family:'Liberation Mono', monospace;-webkit-text-stroke:0.12px currentColor;font-weight:bold;transform:scaleX(0.9019);">3</span>
<span class="t" id="t71" style="left:277.60px;top:175.60px;font-size:9.60px;color:#2a2a2a;font-family:'Liberation Mono', monospace;-webkit-text-stroke:0.12px currentColor;font-weight:bold;transform:scaleX(1.0060);">–</span>
<span class="t" id="t72" style="left:267.00px;top:189.10px;font-size:9.60px;color:#2a2a2a;font-family:'Liberation Mono', monospace;-webkit-text-stroke:0.12px currentColor;font-weight:bold;transform:scaleX(0.9019);">4</span>
<span class="t" id="t73" style="left:277.60px;top:189.10px;font-size:9.60px;color:#2a2a2a;font-family:'Liberation Mono', monospace;-webkit-text-stroke:0.12px currentColor;font-weight:bold;transform:scaleX(1.0060);">–</span>
<span class="t" id="t74" style="left:267.00px;top:202.50px;font-size:9.60px;color:#2a2a2a;font-family:'Liberation Mono', monospace;-webkit-text-stroke:0.12px currentColor;font-weight:bold;transform:scaleX(0.9019);">5</span>
<span class="t" id="t75" style="left:281.00px;top:340.65px;font-size:9.85px;color:#2a2a2a;font-family:'Liberation Mono', monospace;-webkit-text-stroke:0.12px currentColor;transform:scaleX(1.0233);">&gt;&gt; Untitled</span>
<span class="t" id="t76" style="left:281.00px;top:367.65px;font-size:9.85px;color:#2a2a2a;font-family:'Liberation Mono', monospace;-webkit-text-stroke:0.12px currentColor;transform:scaleX(1.0152);">A1 =</span>
<span class="t" id="t77" style="left:312.80px;top:395.90px;font-size:9.85px;color:#2a2a2a;font-family:'Liberation Mono', monospace;-webkit-text-stroke:0.12px currentColor;transform:scaleX(0.7355);">''</span>
<span class="t" id="t78" style="left:281.00px;top:434.90px;font-size:9.85px;color:#444;font-family:'Liberation Mono', monospace;-webkit-text-stroke:0.12px currentColor;transform:scaleX(1.0145);">&gt;&gt;</span>
<span class="t" id="t79" style="left:294.70px;top:31.80px;font-size:11.50px;color:#1e1e1e;font-family:'Liberation Serif', serif;font-style:italic;transform:scaleX(1.2391);">fx</span>
<span class="t" id="t80" style="left:276.00px;top:50.00px;font-size:12.50px;color:#5a9a20;font-family:'Liberation Sans', sans-serif;transform:scaleX(1.0157);">%</span>
<span class="t" id="t81" style="left:293.00px;top:49.40px;font-size:11.50px;color:#6aa832;font-family:'Liberation Sans', sans-serif;transform:scaleX(0.9771);">%</span>
<span class="t" id="t82" style="left:311.00px;top:49.60px;font-size:11.50px;color:#86b858;font-family:'Liberation Sans', sans-serif;transform:scaleX(0.8794);">%</span>
<span class="t" id="t83" style="left:266.90px;top:433.30px;font-size:11.50px;color:#222;font-family:'Liberation Serif', serif;font-style:italic;transform:scaleX(1.1188);">fx</span>
<span class="t" id="t84" style="left:8.20px;top:411.00px;font-size:5.40px;color:#4a4618;font-family:'Liberation Sans', sans-serif;transform:scaleX(0.9882);">abc</span>
<span class="t" id="t85" style="left:8.20px;top:449.20px;font-size:5.40px;color:#4a4618;font-family:'Liberation Sans', sans-serif;transform:scaleX(0.9882);">abc</span>
</body></html>
